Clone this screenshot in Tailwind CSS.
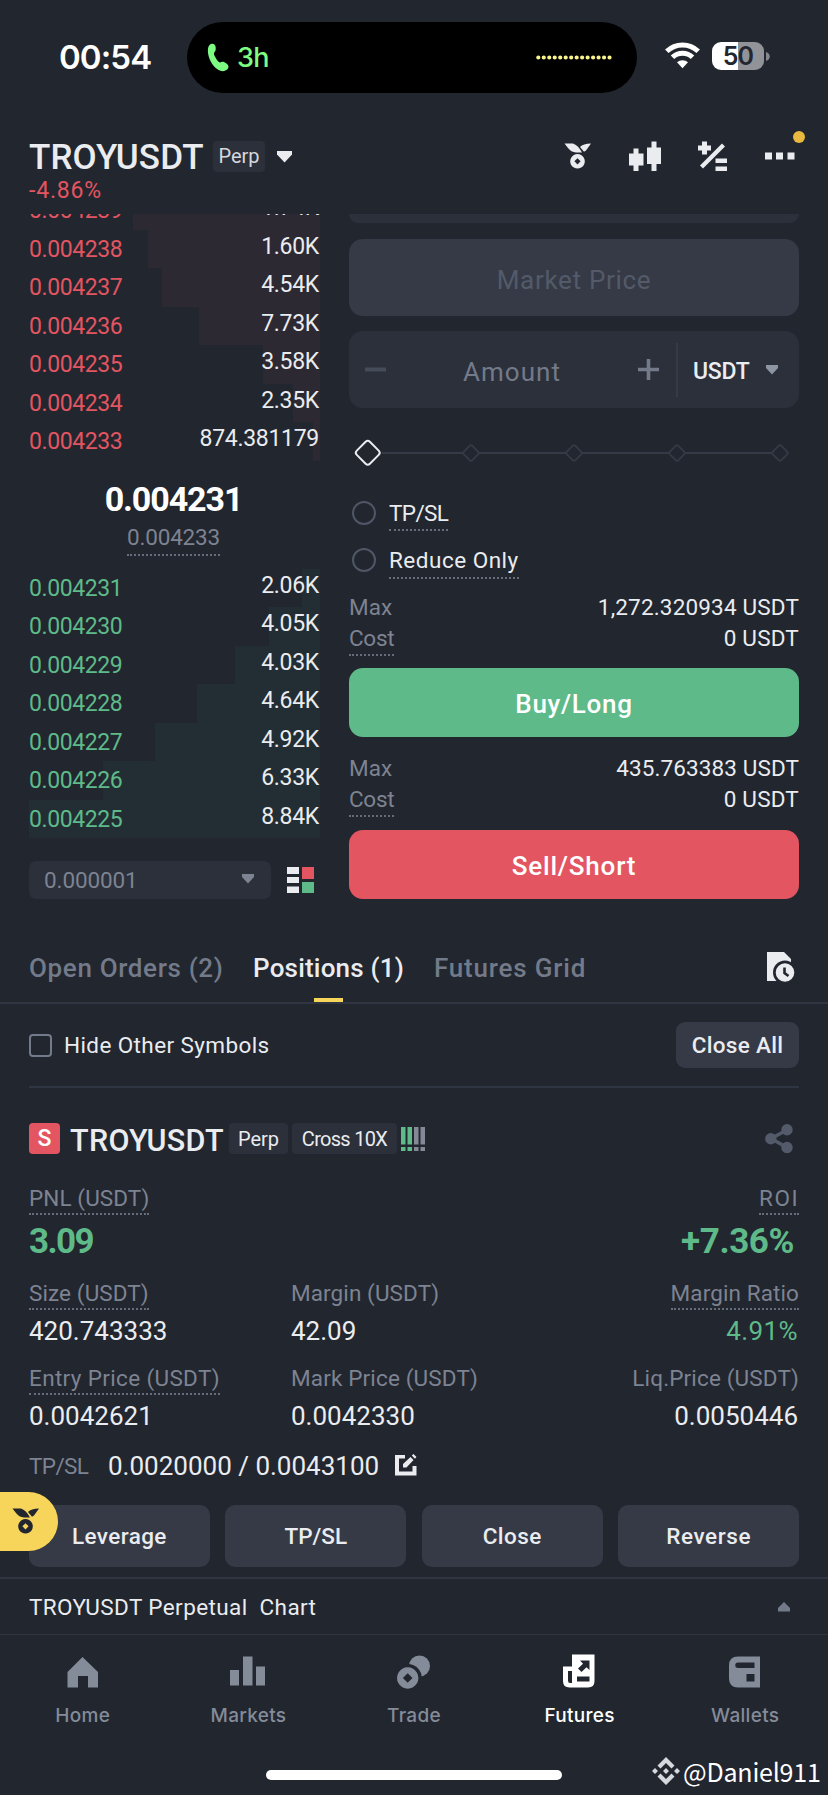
<!DOCTYPE html>
<html lang="en">
<head>
  <meta charset="UTF-8">
  <meta name="viewport" content="width=device-width, initial-scale=1.0">
  <title>TROYUSDT Perp</title>
  <script src="https://cdn.jsdelivr.net/npm/@tailwindcss/browser@4"></script>
</head>
<body class="bg-[#22262f] text-[#eaecef] font-['Roboto',sans-serif] text-[22.5px] leading-[30px] w-[828px] h-[1795px] overflow-hidden flex flex-col relative">

  <!-- Status bar -->
  <div class="h-[114px] shrink-0 pt-[22px] flex items-start font-['Inter',sans-serif]">
    <div class="w-[187px] pl-[59px] h-[70px] flex items-center text-white text-[33px] font-semibold tracking-[-0.9px]">00:54</div>
    <div class="w-[450px] h-[71px] rounded-full bg-black flex items-center pl-[20px] pr-[25px]">
      <svg class="w-[22px] h-[29px]" viewBox="0 0 22 29" fill="#7dfb83"><path d="M1 5.500C1.500 2 4 .2 6.500 1C8 1.500 8.600 3 8.700 4.800C8.800 6.800 8.700 8 7.400 9.200C6.400 10.300 7 12 8.500 14.500C10 17.200 11.500 19.200 13 19.400C14.500 19.400 15 18.400 17 19C19.500 20 21.300 21.800 21.500 23.600C21.500 26.400 18.500 28.400 15.500 28.200C10 27.500 5.500 22.500 3 17C1.300 13 .5 9 1 5.500Z"/></svg>
      <span class="ml-[8px] text-[27px] font-medium text-[#7dfb83] tracking-[-0.7px]">3h</span>
      <svg class="ml-auto w-[76px] h-[5px]" viewBox="0 0 76 5"><path d="M2.300 2.500H75" stroke="#f9f48c" stroke-width="4.200" stroke-linecap="round" stroke-dasharray="0 5.480"/></svg>
    </div>
    <svg class="ml-[28px] mt-[20px] w-[35px] h-[27px]" viewBox="0 0 35 27" fill="none" stroke="#fff" stroke-width="5">
      <path d="M1.800 9.300C10.500 .8 24.500 .8 33.200 9.300"/>
      <path d="M7.500 15.200C13 9.800 22 9.800 27.500 15.200"/>
      <path d="M17.500 26.200L12 20.300C15 17.400 20 17.400 23 20.300Z" fill="#fff" stroke="none"/>
    </svg>
    <div class="ml-[12px] mt-[20px] w-[52px] h-[28px] rounded-[9px] bg-linear-to-r from-white from-50% to-[#929399] to-50% flex items-center justify-center text-[#22262f] text-[25px] font-semibold tracking-[-0.8px]">50</div>
    <svg class="ml-[2px] mt-[30px] w-[4px] h-[9px]" viewBox="0 0 4 9" fill="#85878c"><path d="M0 0C5 1.500 5 7.500 0 9Z"/></svg>
  </div>

  <!-- Pair header -->
  <header class="h-[100px] shrink-0 pl-[29px] flex items-start justify-between">
    <div>
      <div class="h-[62px] pt-[26px] flex items-center">
        <h1 class="text-[35px] leading-[36px] font-medium tracking-[0.1px] w-[184px]">TROYUSDT</h1>
        <span class="w-[52px] h-[31px] rounded-[4px] bg-[#2b303b] text-[20px] leading-[31px] text-center text-[#d5d8dd] mb-[3px]">Perp</span>
        <svg class="ml-[12px] w-[15px] h-[12px] mb-[3px]" viewBox="0 0 15 12" fill="#eaecef"><path d="M0 0H15V3.500L7.500 11.500L0 3.500Z"/></svg>
      </div>
      <div class="text-[#e25561] text-[23px] leading-[30px] tracking-[0.8px]">-4.86%</div>
    </div>
    <svg class="mt-[12px] w-[264px] h-[50px]" viewBox="564 126 264 50" fill="#eaecef">
      <path d="M564.500 143.500H573Q578 145 582 152.500H576Q571 152 568 148ZM580 147Q583 143.500 591 143.500L586 150.500L584 151.800Z"/>
      <path fill-rule="evenodd" d="M577.500 154a7.300 7.300 0 1 0 .01 0ZM577.500 158.200L580.600 161.300L577.500 164.400L574.400 161.300Z"/>
      <path d="M629 153.500H633.500V148.500H638.500V153.500H643.500V165.500H638.500V171H633.500V165.500H629ZM647 147.500H651.500V141.500H656.500V147.500H661V164H656.500V171H651.500V164H647Z"/>
      <path d="M702 141.500H707V145.500H711V150.500H707V154.500H702V150.500H698V145.500H702ZM722 143.500L725 146.500L703 168.500L700 165.500ZM715.500 158.500H727V163H715.500ZM715.500 166.500H727V171H715.500Z"/>
      <path d="M765 152.500H772V159.500H765ZM776 152.500H783V159.500H776ZM787.500 152.500H794.500V159.500H787.500Z"/>
      <circle cx="799" cy="137" r="6" fill="#e8b93f"/>
    </svg>
  </header>

  <!-- Order book and order form -->
  <main class="h-[719px] shrink-0 overflow-hidden flex px-[29px]">
    <section class="w-[291px] -mt-[23px]">
      <div id="asks"></div>
      <div class="h-[108px] flex flex-col items-center pt-[18px] pr-0.5">
        <div class="text-white text-[34px] leading-[40px] font-bold tracking-[-1.1px]">0.004231</div>
        <div class="mt-[2px] h-[35px] leading-[33px] text-[#7d8391] tracking-[-0.2px] border-b-2 border-dotted border-[#666c7a]">0.004233</div>
      </div>
      <div id="bids"></div>
      <div class="mt-[23px] flex items-center">
        <div class="w-[242px] h-[38px] rounded-[7px] bg-[#2b303b] flex items-center justify-between pl-[15px] pr-[17px] text-[#7d8391]">
          <span class="tracking-[-0.1px]">0.000001</span>
          <svg class="w-[12px] h-[10px] mb-0.5" viewBox="0 0 12 10" fill="currentColor"><path d="M0 0H12V3L6 9.500L0 3Z"/></svg>
        </div>
        <svg class="ml-[16px] w-[27px] h-[26px]" viewBox="0 0 27 26" fill="#eaecef">
          <path d="M0 0H12V7H0ZM0 10H12V16H0ZM0 19.500H12V26H0Z"/>
          <path d="M15 0H27V12H15Z" fill="#e25561"/><path d="M15 15H27V26H15Z" fill="#5eba89"/>
        </svg>
      </div>
    </section>

    <section class="ml-[29px] w-[450px]">
      <div class="h-[9px] bg-[#2b303b] rounded-b-[12px]"></div>
      <div class="mt-[16px] h-[77px] rounded-[14px] bg-[#353a46] text-[#535a69] flex items-center justify-center text-[26px] tracking-[0.7px] pt-1">Market Price</div>
      <div class="mt-[15px] h-[77px] rounded-[14px] bg-[#2b303b] flex items-center text-[#7d8391]">
        <svg class="ml-[16px] w-[21px] h-[21px]" viewBox="0 0 21 21"><path d="M0 10.500H21" stroke="#454b59" stroke-width="4"/></svg>
        <span class="flex-1 text-center text-[26px] tracking-[1px] pt-1 text-[#737a89]">Amount</span>
        <svg class="w-[21px] h-[21px]" viewBox="0 0 21 21"><path d="M0 10.500H21M10.500 0V21" stroke="#737a89" stroke-width="3.600"/></svg>
        <div class="ml-[17px] w-[2px] h-[54px] bg-[#353a46]"></div>
        <span class="ml-[15px] w-[73px] pt-1 text-[#eaecef] font-medium text-[23px] tracking-[-0.2px]">USDT</span>
        <svg class="mr-[21px] w-[12px] h-[10px]" viewBox="0 0 12 10" fill="#8d94a2"><path d="M0 0H12V3L6 9.500L0 3Z"/></svg>
      </div>
      <svg class="mt-[29px] w-[450px] h-[32px]" viewBox="349 437 450 32" fill="none">
        <path d="M382 453H464M479 453H567M582 453H670M685 453H773" stroke="#353a46" stroke-width="2"/>
        <g stroke="#353a46" stroke-width="1.800">
          <rect x="465" y="447" width="12" height="12" rx="2" transform="rotate(45 471 453)"/>
          <rect x="568" y="447" width="12" height="12" rx="2" transform="rotate(45 574 453)"/>
          <rect x="671" y="447" width="12" height="12" rx="2" transform="rotate(45 677 453)"/>
          <rect x="774" y="447" width="12" height="12" rx="2" transform="rotate(45 780 453)"/>
        </g>
        <rect x="358.500" y="443.500" width="18.500" height="18.500" rx="3" transform="rotate(45 367.750 452.750)" stroke="#eaecef" stroke-width="2"/>
      </svg>
      <div class="mt-[29px] h-[32px] pl-[3px] flex items-start">
        <span class="mt-[3px] w-[24px] h-[24px] rounded-full border-2 border-[#4f5666]"></span>
        <span class="ml-[13px] h-[33px] border-b-2 border-dotted border-[#666c7a] tracking-[-0.6px]">TP/SL</span>
      </div>
      <div class="mt-[15px] h-[33px] pl-[3px] flex items-start">
        <span class="mt-[3px] w-[24px] h-[24px] rounded-full border-2 border-[#4f5666]"></span>
        <span class="ml-[13px] h-[34px] border-b-2 border-dotted border-[#666c7a] tracking-[0.5px]">Reduce Only</span>
      </div>
      <div class="mt-[14px] flex justify-between"><span class="text-[#7d8391]">Max</span><span class="tracking-[0.17px]">1,272.320934 USDT</span></div>
      <div class="mt-[1px] h-[32px] flex justify-between"><span class="h-[33px] text-[#7d8391] border-b-2 border-dotted border-[#666c7a] tracking-[-0.3px]">Cost</span><span class="tracking-[0.2px]">0 USDT</span></div>
      <div class="mt-[13px] h-[69px] rounded-[14px] bg-[#5eba89] text-white font-medium text-[26px] tracking-[0.7px] flex items-center justify-center pt-0.5">Buy/Long</div>
      <div class="mt-[16px] flex justify-between"><span class="text-[#7d8391]">Max</span><span class="tracking-[0.1px]">435.763383 USDT</span></div>
      <div class="mt-[1px] h-[32px] flex justify-between"><span class="h-[33px] text-[#7d8391] border-b-2 border-dotted border-[#666c7a] tracking-[-0.3px]">Cost</span><span class="tracking-[0.2px]">0 USDT</span></div>
      <div class="mt-[14px] h-[69px] rounded-[14px] bg-[#e25561] text-white font-medium text-[26px] tracking-[0.8px] flex items-center justify-center pt-0.5">Sell/Short</div>
    </section>
  </main>

  <!-- Tabs -->
  <nav class="h-[71px] shrink-0 border-b-2 border-[#2f3541] px-[29px] flex text-[26px] leading-[70px] font-medium text-[#737a89]">
    <span class="w-[224px] whitespace-nowrap tracking-[0.65px]">Open Orders (2)</span>
    <span class="w-[152px] mr-[29px] whitespace-nowrap tracking-[0.2px] text-[#eaecef] relative">Positions (1)
      <span class="absolute left-[61px] bottom-0 w-[29px] h-[4px] bg-[#f7d55b]"></span>
    </span>
    <span class="tracking-[0.8px]">Futures Grid</span>
    <svg class="ml-auto mr-[4px] mt-[19px] w-[28px] h-[31px]" viewBox="0 0 28 31">
      <path d="M0 0H17L24 7V20L10 29H0Z" fill="#eaecef"/>
      <circle cx="18" cy="20.500" r="12" fill="#22262f"/>
      <circle cx="18" cy="20.500" r="9.300" fill="#eaecef"/>
      <path d="M17.500 15.500V21L21.500 24" stroke="#22262f" stroke-width="2.600" fill="none"/>
    </svg>
  </nav>
  <div class="mx-[29px] h-[84px] shrink-0 border-b-2 border-[#2f3541] flex items-center">
    <span class="w-[23px] h-[23px] rounded-[4px] border-2 border-[#737a89]"></span>
    <span class="ml-[12px] tracking-[0.4px]">Hide Other Symbols</span>
    <button class="ml-auto w-[123px] h-[46px] rounded-[9px] bg-[#353a46] font-medium text-[22.5px] tracking-[0.3px]">Close All</button>
  </div>

  <!-- Position -->
  <section class="h-[489px] shrink-0 px-[29px] pt-[35px] flex flex-col">
    <div class="h-[31px] flex items-center">
      <span class="w-[31px] h-[31px] rounded-[4px] bg-[#e25561] text-white text-[23px] font-medium leading-[32px] text-center">S</span>
      <span class="ml-[10px] w-[159px] text-[30.5px] font-medium tracking-[0.3px] pt-1">TROYUSDT</span>
      <span class="w-[59px] h-[31px] rounded-[4px] bg-[#2b303b] text-[20px] leading-[32px] text-center">Perp</span>
      <span class="ml-[4px] w-[105px] h-[31px] rounded-[4px] bg-[#2b303b] text-[20px] leading-[32px] text-center tracking-[-0.7px]">Cross 10X</span>
      <svg class="ml-[4px] w-[24px] h-[24px]" viewBox="0 0 24 24">
        <path d="M0 0H4.500V17.500H0ZM0 20H4.500V24H0ZM6.500 0H11V17.500H6.500ZM6.500 20H11V24H6.500Z" fill="#5eba89"/>
        <path d="M13 0H17.500V17.500H13ZM13 20H17.500V24H13ZM19.500 0H24V17.500H19.500ZM19.500 20H24V24H19.500Z" fill="#848998"/>
      </svg>
      <svg class="ml-auto mr-[6px] w-[28px] h-[29px]" viewBox="0 0 28 29" fill="#535a69">
        <path d="M22 6L6 14.500L22 23.500" fill="none" stroke="#535a69" stroke-width="3.600"/>
        <circle cx="22" cy="5.800" r="5.700"/><circle cx="5.800" cy="14.700" r="5.700"/><circle cx="22" cy="23.500" r="5.700"/>
      </svg>
    </div>

    <div class="mt-[29px] h-[32px] flex justify-between text-[#7d8391]">
      <span class="h-[32px] border-b-2 border-dotted border-[#666c7a] tracking-[0.1px]">PNL (USDT)</span>
      <span class="h-[32px] border-b-2 border-dotted border-[#666c7a] tracking-[1.5px]">ROI</span>
    </div>
    <div class="mt-[7px] h-[40px] flex justify-between text-[#5eba89] text-[35px] leading-[40px] font-bold">
      <span class="tracking-[-1.6px]">3.09</span><span class="pr-[5px] tracking-[-0.4px]">+7.36%</span>
    </div>

    <div class="mt-[16px] grid grid-cols-[262px_262px_1fr] text-[#7d8391] tracking-[0.1px]">
      <span class="h-[32px] justify-self-start border-b-2 border-dotted border-[#666c7a]">Size (USDT)</span>
      <span>Margin (USDT)</span>
      <span class="h-[32px] justify-self-end border-b-2 border-dotted border-[#666c7a]">Margin Ratio</span>
    </div>
    <div class="mt-[4px] grid grid-cols-[262px_262px_1fr] text-[26px] leading-[34px]">
      <span>420.743333</span><span>42.09</span><span class="justify-self-end pr-px text-[#5eba89] tracking-[0.4px]">4.91%</span>
    </div>
    <div class="mt-[15px] grid grid-cols-[262px_262px_1fr] text-[#7d8391] tracking-[0.15px]">
      <span class="h-[32px] justify-self-start border-b-2 border-dotted border-[#666c7a] tracking-[0.35px]">Entry Price (USDT)</span>
      <span>Mark Price (USDT)</span>
      <span class="justify-self-end">Liq.Price (USDT)</span>
    </div>
    <div class="mt-[4px] grid grid-cols-[262px_262px_1fr] text-[26px] leading-[34px]">
      <span>0.0042621</span><span>0.0042330</span><span class="justify-self-end pr-px">0.0050446</span>
    </div>
    <div class="mt-[16px] flex items-center text-[26px] leading-[34px]">
      <span class="w-[79px] text-[22.5px] text-[#7d8391] tracking-[-0.6px]">TP/SL</span>
      <span>0.0020000 / 0.0043100</span>
      <svg class="ml-[16px] mb-[3px] w-[22px] h-[22px]" viewBox="0 0 22 22" fill="#eaecef">
        <path d="M0 1H10V4.500H4V17.500H17.500V12H21.500V21.500H0Z"/>
        <path d="M8 10L15.500 3L18.500 6L11.500 13.500H8ZM16.800 1.600L18.500 0L21.500 3L19.900 4.700Z"/>
      </svg>
    </div>
    <div class="mt-[22px] h-[62px] grid grid-cols-4 gap-[15.6px] font-medium">
      <button class="rounded-[10px] bg-[#353a46] tracking-[0.4px]">Leverage</button>
      <button class="rounded-[10px] bg-[#353a46]">TP/SL</button>
      <button class="rounded-[10px] bg-[#353a46] tracking-[0.4px]">Close</button>
      <button class="rounded-[10px] bg-[#353a46] tracking-[0.6px]">Reverse</button>
    </div>
  </section>

  <!-- Floating badge -->
  <div class="absolute left-0 top-[1492px] w-[58px] h-[59px] rounded-r-full bg-[#f7d55b]">
    <svg class="ml-[12px] mt-[16px] w-[27px] h-[26px]" viewBox="564 143 27 26" fill="#22262f">
      <path d="M564.500 143.500H573Q578 145 582 152.500H576Q571 152 568 148ZM580 147Q583 143.500 591 143.500L586 150.500L584 151.800Z"/>
      <path fill-rule="evenodd" d="M577.500 154a7.300 7.300 0 1 0 .01 0ZM577.500 158.200L580.600 161.300L577.500 164.400L574.400 161.300Z"/>
    </svg>
  </div>

  <!-- Chart drawer -->
  <div class="h-[58px] shrink-0 border-t-2 border-b border-[#2f3541] pl-[29px] pr-[38px] flex items-center justify-between">
    <span class="whitespace-pre tracking-[0.4px] pt-px">TROYUSDT Perpetual  Chart</span>
    <svg class="w-[12px] h-[10px]" viewBox="0 0 12 10" fill="#737a89"><path d="M0 9.500H12V6L6 0L0 6Z"/></svg>
  </div>

  <!-- Bottom navigation -->
  <footer class="grid grid-cols-5 pt-[17px] font-['Inter',sans-serif] text-[19px] leading-[26px] tracking-[0.3px] font-medium text-[#848b99]">
    <a class="flex flex-col items-center gap-[11px]">
      <svg class="w-[40px] h-[40px]" viewBox="0 0 40 40" fill="currentColor"><path d="M19.500 5L35 20V35.500H25V24H15V35.500H4.500V20Z"/></svg>
      Home
    </a>
    <a class="flex flex-col items-center gap-[11px]">
      <svg class="w-[40px] h-[40px]" viewBox="0 0 40 40" fill="currentColor"><path d="M2 18H11V33.500H2ZM15 4.500H24.500V33.500H15ZM28 14.500H37V33.500H28Z"/></svg>
      Markets
    </a>
    <a class="flex flex-col items-center gap-[11px]">
      <svg class="w-[40px] h-[40px]" viewBox="0 0 40 40" fill="currentColor">
        <circle cx="25.500" cy="14" r="10.500"/>
        <circle cx="13.700" cy="26" r="14" fill="#22262f"/>
        <path fill-rule="evenodd" d="M13.700 15.300a10.700 10.700 0 1 0 .01 0ZM13.700 21.200L18.500 26L13.700 30.800L8.900 26Z"/>
      </svg>
      Trade
    </a>
    <a class="flex flex-col items-center gap-[11px] text-white">
      <svg class="w-[40px] h-[40px]" viewBox="0 0 40 40">
        <path d="M12 2.500H34.500V29Q34.500 35.500 28 35.500H9.500Q3 35.500 3 29V14.500H12Z" fill="#fff"/>
        <path d="M8 19H12V31H10Q8 31 8 28.500ZM17 24.500H29.500V29.500H17ZM20 8.500H29.500V18L26.500 15.200L21.500 20L18 16.500L23 11.800Z" fill="#22262f"/>
      </svg>
      Futures
    </a>
    <a class="flex flex-col items-center gap-[11px]">
      <svg class="w-[40px] h-[40px]" viewBox="0 0 40 40">
        <path d="M13 4.500H35V35.500H13Q4 35.500 4 26.500V13.500Q4 4.500 13 4.500Z" fill="currentColor"/>
        <path d="M13 10.500H29.500V16H13A2.750 2.750 0 0 1 13 10.500ZM21.500 22H29.500V29.500H21.500Z" fill="#22262f"/>
      </svg>
      Wallets
    </a>
  </footer>
  <div class="absolute left-[266px] top-[1770px] w-[296px] h-[10px] rounded-full bg-white"></div>
  <div class="absolute left-[652px] top-[1756px] flex items-center text-white text-[25px] font-['Noto_Sans_CJK_SC',sans-serif] tracking-[-0.2px]">
    <svg class="w-[28px] h-[28px] mr-[3px]" viewBox="0 0 28 28" fill="#d5d8dd">
      <path d="M14 0L22.500 8.500L19.500 11.500L14 6L8.500 11.500L5.500 8.500ZM14 28L22.500 19.500L19.500 16.500L14 22L8.500 16.500L5.500 19.500ZM14 11L17 14L14 17L11 14ZM3 11L6 14L3 17L0 14ZM25 11L28 14L25 17L22 14Z"/>
    </svg>
    @Daniel911
  </div>

  <script>
    // [price, quantity, depth bar width in px]
    const asks = [
      ['0.004239', '1.74K', 187], ['0.004238', '1.60K', 172], ['0.004237', '4.54K', 158],
      ['0.004236', '7.73K', 121], ['0.004235', '3.58K', 57], ['0.004234', '2.35K', 27],
      ['0.004233', '874.381179', 7]
    ];
    const bids = [
      ['0.004231', '2.06K', 18], ['0.004230', '4.05K', 51], ['0.004229', '4.03K', 85],
      ['0.004228', '4.64K', 123], ['0.004227', '4.92K', 165], ['0.004226', '6.33K', 217],
      ['0.004225', '8.84K', 291]
    ];

    function renderRows(id, rows, textClass, barClass) {
      document.getElementById(id).innerHTML = rows.map(([price, qty, width]) => `
        <div class="relative h-[38.5px] flex justify-between text-[23px] leading-[38px]">
          <div class="absolute right-0 inset-y-0 ${barClass}" style="width:${width}px"></div>
          <span class="relative mt-[1px] tracking-[-0.4px] ${textClass}">${price}</span>
          <span class="relative -mt-[2px] pr-px tracking-[-0.3px]">${qty}</span>
        </div>`).join('');
    }

    renderRows('asks', asks, 'text-[#e25561]', 'bg-[#2d2932]');
    renderRows('bids', bids, 'text-[#5eba89]', 'bg-[#232e34]');
  </script>

</body>
</html>
